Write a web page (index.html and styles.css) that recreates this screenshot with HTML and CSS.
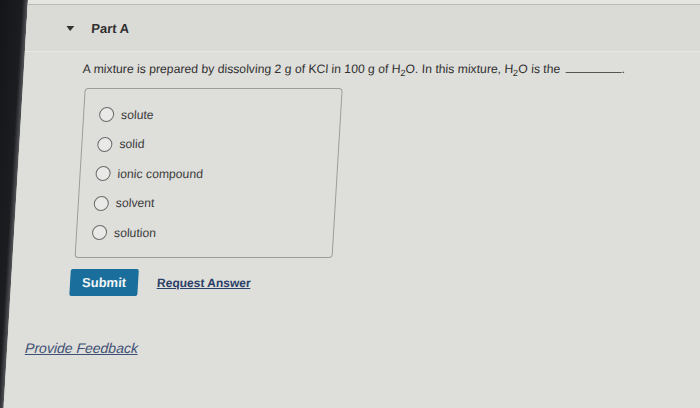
FILE: index.html
```html
<!DOCTYPE html>
<html lang="en">
<head>
<meta charset="utf-8">
<title>Part A</title>
<link rel="stylesheet" href="styles.css">
</head>
<body>
<div class="screen">
  <div class="bezel"></div>
  <main class="page">
    <div class="topbar"></div>
    <header class="part-head">
      <svg class="caret" width="8" height="5" viewBox="0 0 8 5"><polygon points="0,0 8,0 4,5" fill="#333"/></svg>
      <span class="part-title">Part A</span>
    </header>
    <section class="part-body">
      <p class="question">A mixture is prepared by dissolving 2 g of KCl in 100 g of H<sub>2</sub>O. In this mixture, H<sub>2</sub>O is the <span class="blank"></span>.</p>
      <div class="choices">
        <label class="choice"><span class="radio"></span><span class="choice-text">solute</span></label>
        <label class="choice"><span class="radio"></span><span class="choice-text">solid</span></label>
        <label class="choice"><span class="radio"></span><span class="choice-text">ionic compound</span></label>
        <label class="choice"><span class="radio"></span><span class="choice-text">solvent</span></label>
        <label class="choice"><span class="radio"></span><span class="choice-text">solution</span></label>
      </div>
      <div class="actions">
        <button class="submit" type="button">Submit</button>
        <a class="request" href="#">Request Answer</a>
      </div>
    </section>
    <div class="feedback-row"><a class="feedback" href="#">Provide Feedback</a></div>
  </main>
</div>
</body>
</html>
```

FILE: styles.css
```css
html, body {
  margin: 0;
  padding: 0;
  width: 700px;
  height: 408px;
  overflow: hidden;
  background: #dededa;
  font-family: "Liberation Sans", Arial, sans-serif;
}

.screen {
  display: flex;
  width: 760px;
  height: 430px;
  transform: skewX(-3.43deg);
  transform-origin: 0 0;
}

.bezel {
  flex: 0 0 28px;
  background: linear-gradient(90deg, #141518 0%, #1c1d20 80%, #55575a 100%);
}

.page {
  flex: 1;
  display: flex;
  flex-direction: column;
  background: #dededa;
}

.topbar {
  height: 4px;
  background: #e4e4e1;
  border-bottom: 1px solid #b9b9b6;
}

.part-head {
  height: 47px;
  display: flex;
  align-items: center;
  padding-left: 40px;
  background: #dadad6;
  border-bottom: 1px solid #e7e7e4;
  box-sizing: border-box;
}

.caret {
  display: block;
  margin-right: 17px;
}

.part-title {
  font-size: 13px;
  font-weight: 700;
  color: #2f2f2f;
}

.part-body {
  padding-left: 59px;
  display: flex;
  flex-direction: column;
  align-items: flex-start;
}

.question {
  margin: 9px 0 0 0;
  font-size: 12.2px;
  line-height: 16px;
  height: 27px;
  color: #303030;
}

.question sub {
  font-size: 9px;
  line-height: 0;
}

.blank {
  display: inline-block;
  width: 56px;
  border-bottom: 1px solid #555;
  margin-left: 2px;
}

.choices {
  margin-left: 3px;
  width: 258px;
  box-sizing: border-box;
  border: 1px solid #9c9c9a;
  border-radius: 4px;
  padding: 11px 0 9.5px 15px;
  display: flex;
  flex-direction: column;
}

.choice {
  height: 29.5px;
  display: flex;
  align-items: center;
  gap: 7px;
}

.radio {
  width: 15px;
  height: 15px;
  box-sizing: border-box;
  border: 1.5px solid #6c6c6c;
  border-radius: 50%;
  background: #e9e9e7;
}

.choice-text {
  font-size: 12.2px;
  color: #3a3a3a;
}

.actions {
  margin-top: 11px;
  display: flex;
  align-items: center;
  gap: 19px;
}

.submit {
  width: 68px;
  height: 27px;
  border: none;
  border-radius: 2px;
  background: #1a6e9b;
  color: #f2f6f8;
  font-family: "Liberation Sans", Arial, sans-serif;
  font-size: 13px;
  font-weight: 700;
  padding: 0;
}

.request {
  font-size: 12px;
  font-weight: 700;
  color: #2b3f68;
  text-decoration: underline;
}

.feedback-row {
  margin-top: 43px;
  padding-left: 18px;
}

.feedback {
  font-size: 14px;
  font-style: italic;
  color: #3f5174;
  text-decoration: underline;
}
```
